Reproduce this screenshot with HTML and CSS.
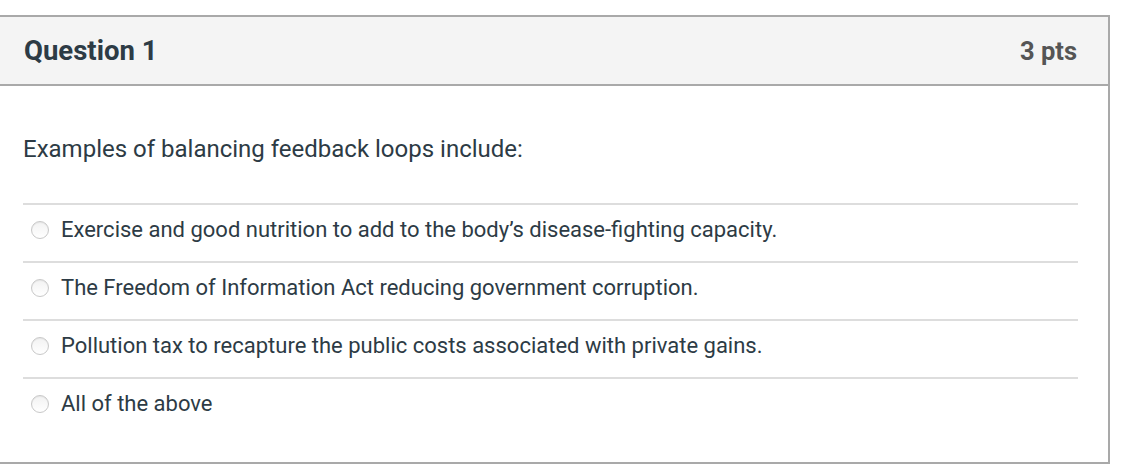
FILE: index.html
```html
<!DOCTYPE html>
<html>
<head>
<meta charset="utf-8">
<link rel="stylesheet" href="styles.css">
</head>
<body>
<div class="question">
  <div class="header">
    <span class="title">Question 1</span>
    <span class="pts">3 pts</span>
  </div>
  <div class="content">
    <div class="prompt">Examples of balancing feedback loops include:</div>
    <div class="answers">
      <label class="answer"><span class="radio"></span><span class="label">Exercise and good nutrition to add to the body’s disease-fighting capacity.</span></label>
      <label class="answer"><span class="radio"></span><span class="label">The Freedom of Information Act reducing government corruption.</span></label>
      <label class="answer"><span class="radio"></span><span class="label">Pollution tax to recapture the public costs associated with private gains.</span></label>
      <label class="answer"><span class="radio"></span><span class="label">All of the above</span></label>
    </div>
  </div>
</div>
</body>
</html>
```
FILE: styles.css
```css
html, body {
  margin: 0;
  padding: 0;
  background: #ffffff;
}
body {
  font-family: Roboto, "Liberation Sans", sans-serif;
  color: #2d3b45;
}
.question {
  margin-top: 15px;
  width: 1110px;
  height: 449px;
  border: 2px solid #a9a9a9;
  border-left: none;
  box-sizing: border-box;
  display: flex;
  flex-direction: column;
}
.header {
  height: 69px;
  box-sizing: border-box;
  background: #f4f4f4;
  border-bottom: 2px solid #a9a9a9;
  display: flex;
  align-items: center;
  justify-content: space-between;
  padding: 0 31px 0 24px;
}
.title {
  font-size: 27.5px;
  font-weight: 700;
  color: #2d3b45;
}
.pts {
  font-size: 25.5px;
  font-weight: 700;
  color: #555555;
}
.content {
  padding: 0 30px 0 23px;
}
.prompt {
  font-size: 24px;
  line-height: 30px;
  padding: 48px 0 39px 0;
}
.answer {
  display: flex;
  align-items: center;
  gap: 12px;
  border-top: 2px solid #dddddd;
  padding: 11px 0 17px 8px;
  height: 28px;
  box-sizing: content-box;
  font-size: 22px;
  line-height: 28px;
}
.radio {
  width: 16px;
  height: 16px;
  border-radius: 50%;
  border: 1px solid #c8c8c8;
  background: linear-gradient(#f2f2f2, #ffffff);
  box-shadow: inset 0 1px 1px rgba(0,0,0,0.06);
  flex: none;
}
```
